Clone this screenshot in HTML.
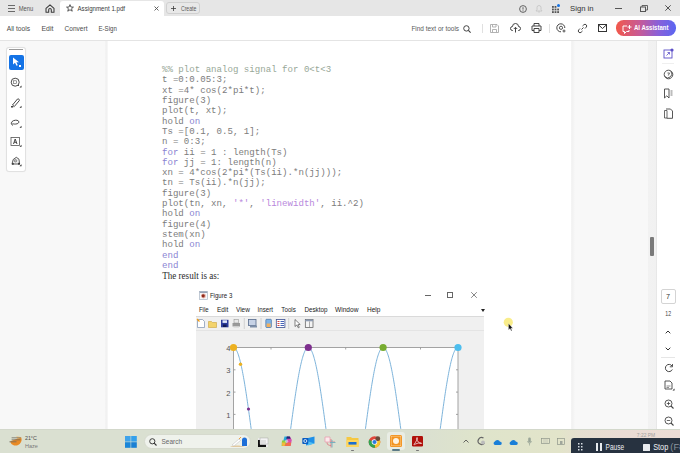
<!DOCTYPE html>
<html><head><meta charset="utf-8">
<style>
*{margin:0;padding:0;box-sizing:border-box}
html,body{width:680px;height:453px;overflow:hidden;background:#fff;font-family:"Liberation Sans",sans-serif;position:relative}
.a{position:absolute}
.t{position:absolute;white-space:nowrap;line-height:1;transform-origin:0 0}
svg{position:absolute;overflow:visible}
#titlebar{left:0;top:0;width:680px;height:16px;background:#e6e6e6}
#tab{left:60px;top:1px;width:104px;height:15px;background:#fff;border-radius:3px 3px 0 0}
#create{left:166px;top:2.2px;width:34.4px;height:12.2px;border:0.8px solid #d0d0d0;border-radius:3px;background:#e8e8e8}
#toolbar{left:0;top:16px;width:680px;height:25px;background:#fff;border-bottom:1px solid #e4e4e4}
#leftpanel{left:0;top:41px;width:108px;height:388px;background:linear-gradient(90deg,#f8f8f8 0,#f8f8f8 104.5px,#f0f0f0 106px,#f2f2f2 107px,#fafafa 108px)}
#rightgray{left:571px;top:41px;width:86px;height:388px;background:linear-gradient(90deg,#f6f6f6 0,#f1f1f1 1px,#f4f4f4 2.5px,#f8f8f8 4px,#f8f8f8 100%)}
#scrolltrack{left:648px;top:41px;width:9px;height:388px;background:linear-gradient(90deg,#f2f2f2 0,#f1f1f1 7.5px,#e6e6e6 8px,#e9e9e9 9px)}
#rail{left:657px;top:41px;width:23px;height:388px;background:#fff}
#code{left:162px;top:65px;font-family:"Liberation Mono",monospace;font-size:9.1px;line-height:10.32px;color:#7c7c7c;white-space:pre}
.kw{color:#8a84d2}
.cm{color:#98a898}
.st{color:#b888dc}
#taskbar{left:0;top:429px;width:680px;height:24px;background:#dae0d1}
.ui{color:#4b4b4b}
</style></head><body>
<div class="a" id="titlebar"></div>
<div class="a" id="tab"></div>
<div class="a" id="create"></div>
<!-- hamburger -->
<div class="a" style="left:8px;top:5.3px;width:7px;height:1.1px;background:#6a6a6a"></div>
<div class="a" style="left:8px;top:8px;width:7px;height:1.1px;background:#6a6a6a"></div>
<div class="a" style="left:8px;top:10.7px;width:7px;height:1.1px;background:#6a6a6a"></div>
<svg style="left:45px;top:3.8px" width="10" height="9" viewBox="0 0 10 9"><path d="M1 4.3 L5 0.8 L9 4.3 V8.3 H6.3 V5.8 A1.3 1.3 0 0 0 3.7 5.8 V8.3 H1 Z" fill="none" stroke="#3a3a3a" stroke-width="1.05" stroke-linejoin="round"/></svg>
<svg style="left:65.5px;top:4px" width="8" height="8" viewBox="0 0 10 10"><path d="M5 0.8 L6.2 3.8 L9.3 3.9 L6.9 5.9 L7.8 9 L5 7.2 L2.2 9 L3.1 5.9 L0.7 3.9 L3.8 3.8 Z" fill="none" stroke="#444" stroke-width="1.1" stroke-linejoin="round"/></svg>
<svg style="left:153.5px;top:6px" width="5" height="5" viewBox="0 0 5 5"><path d="M0.5 0.5 L4.5 4.5 M4.5 0.5 L0.5 4.5" stroke="#555" stroke-width="0.9"/></svg>
<svg style="left:171px;top:6px" width="5" height="5" viewBox="0 0 5 5"><path d="M2.5 0 V5 M0 2.5 H5" stroke="#333" stroke-width="0.75"/></svg>
<!-- right title -->
<svg style="left:519px;top:4.5px" width="8" height="8" viewBox="0 0 8 8"><circle cx="4" cy="4" r="3.4" fill="none" stroke="#555" stroke-width="0.9"/><path d="M4 2.2 V4.6" stroke="#555" stroke-width="0.9"/><circle cx="4" cy="5.8" r="0.5" fill="#555"/></svg>
<svg style="left:535px;top:4px" width="8" height="9" viewBox="0 0 8 9"><path d="M1 7 H7 L6 5.5 V3.5 A2 2 0 0 0 2 3.5 V5.5 Z M3.2 8 H4.8" fill="none" stroke="#c6c6c6" stroke-width="0.9"/></svg>
<svg style="left:552px;top:4px" width="9" height="9" viewBox="0 0 9 9"><g fill="#555"><rect x="0" y="2" width="1.8" height="1.8"/><rect x="2.6" y="2" width="1.8" height="1.8"/><rect x="0" y="4.6" width="1.8" height="1.8"/><rect x="2.6" y="4.6" width="1.8" height="1.8"/><rect x="5.2" y="4.6" width="1.8" height="1.8"/><rect x="0" y="7.2" width="1.8" height="1.8"/><rect x="2.6" y="7.2" width="1.8" height="1.8"/><rect x="5.2" y="7.2" width="1.8" height="1.8"/></g><circle cx="6.5" cy="1.5" r="1.5" fill="#1473e6"/></svg>
<div class="a" style="left:615px;top:8px;width:7px;height:1px;background:#555"></div>
<svg style="left:640px;top:4.5px" width="8" height="7" viewBox="0 0 8 7"><rect x="0.5" y="2" width="5" height="4.5" fill="none" stroke="#555" stroke-width="1"/><path d="M2 2 V0.5 H7.5 V5 H5.5" fill="none" stroke="#555" stroke-width="0.9"/></svg>
<svg style="left:665px;top:5px" width="6" height="6" viewBox="0 0 6 6"><path d="M0.3 0.3 L5.7 5.7 M5.7 0.3 L0.3 5.7" stroke="#444" stroke-width="0.9"/></svg>

<div class="a" id="toolbar"></div>
<svg style="left:463px;top:24.5px" width="9" height="9" viewBox="0 0 9 9"><circle cx="3.4" cy="3.4" r="2.7" fill="none" stroke="#3a3a3a" stroke-width="0.95"/><path d="M5.4 5.4 L7.6 7.6" stroke="#3a3a3a" stroke-width="1.05"/></svg>
<div class="a" style="left:482px;top:24px;width:1px;height:9px;background:#e0e0e0"></div>
<svg style="left:490px;top:23.8px" width="9" height="9" viewBox="0 0 9 9"><path d="M0.5 0.5 H7 L8.5 2 V8.5 H0.5 Z M2.5 0.5 V3 H6 V0.5 M2.5 8.5 V5.5 H6.5 V8.5" fill="none" stroke="#aaa" stroke-width="0.9"/></svg>
<svg style="left:510px;top:22.8px" width="11" height="10" viewBox="0 0 11 10"><path d="M3 7.5 H2.5 A2 2 0 0 1 2.5 3.5 A3 3 0 0 1 8.5 3.5 A2 2 0 0 1 8.5 7.5 H8 M5.5 9.5 V4.5 M3.8 6 L5.5 4.3 L7.2 6" fill="none" stroke="#444" stroke-width="1"/></svg>
<svg style="left:531px;top:23.2px" width="11" height="10" viewBox="0 0 11 10"><path d="M3 3 V0.5 H8 V3 M3 7.5 H1 V3 H10 V7.5 H8 M3 5.5 H8 V9.5 H3 Z" fill="none" stroke="#444" stroke-width="1"/></svg>
<div class="a" style="left:549px;top:24px;width:1px;height:9px;background:#e0e0e0"></div>
<svg style="left:556px;top:23.2px" width="11" height="10" viewBox="0 0 11 10"><path d="M8.8 5 A4 4 0 1 0 5 8.8" fill="none" stroke="#444" stroke-width="1"/><circle cx="5" cy="4.8" r="1.6" fill="none" stroke="#444" stroke-width="0.9"/><path d="M8 6.5 V9.5 M6.5 8 H9.5" stroke="#444" stroke-width="0.9"/></svg>
<svg style="left:578px;top:23.7px" width="9" height="9" viewBox="0 0 9 9"><path d="M3.5 5.5 L5.5 3.5 M4.5 2 L5.8 0.8 A1.6 1.6 0 0 1 8.2 3.2 L7 4.5 M4.5 7 L3.2 8.2 A1.6 1.6 0 0 1 0.8 5.8 L2 4.5" fill="none" stroke="#444" stroke-width="1"/></svg>
<svg style="left:598px;top:24.2px" width="9" height="8" viewBox="0 0 9 8"><rect x="0.5" y="0.5" width="8" height="7" fill="none" stroke="#333" stroke-width="1"/><path d="M0.5 0.8 L4.5 4.5 L8.5 0.8" fill="none" stroke="#333" stroke-width="1"/></svg>
<div class="a" style="left:616.4px;top:20.3px;width:59.5px;height:15.3px;border-radius:7.6px;background:linear-gradient(90deg,#f2584a 0%,#c65a98 40%,#8a60d8 70%,#5a66f2 100%)"></div>
<svg style="left:622px;top:24.5px" width="10" height="9" viewBox="0 0 10 9"><path d="M5 1 H1 V6.5 H2.5 V8.5 L4.5 6.5 H7 V5" fill="none" stroke="#fff" stroke-width="1"/><path d="M7.5 0 V4 M5.5 2 H9.5" stroke="#fff" stroke-width="1"/></svg>

<div class="a" id="leftpanel"></div>
<div class="a" id="rightgray"></div>
<div class="a" id="scrolltrack"></div>
<div class="a" id="rail"></div>

<!-- left tool palette -->
<div class="a" style="left:6.4px;top:46.5px;width:19.3px;height:125px;background:#fff;border:1px solid #e1e1e1;border-radius:3px;box-shadow:0 0 1px rgba(0,0,0,.08)"></div>
<div class="a" style="left:9px;top:48.5px;width:14px;height:1.2px;background:#9a9a9a"></div>
<div class="a" style="left:8.5px;top:54.5px;width:15px;height:15.5px;background:#1473e6;border-radius:2px"></div>
<svg style="left:12px;top:57px" width="9" height="10" viewBox="0 0 9 10"><path d="M1 0.5 L1 7.5 L3 5.8 L4.5 8.8 L5.8 8.2 L4.4 5.3 L7 5.2 Z" fill="#fff"/><path d="M7 8 L9 8 L9 10 L7 10Z" fill="#fff"/></svg>
<svg style="left:10px;top:77px" width="12" height="12" viewBox="0 0 12 12"><circle cx="5.2" cy="5.2" r="4" fill="none" stroke="#333" stroke-width="0.9"/><rect x="3.6" y="3.8" width="3" height="2.6" fill="none" stroke="#555" stroke-width="0.6"/><path d="M8 8 L9 9" stroke="#333" stroke-width="0.9"/><path d="M9.5 10.5 L11.5 10.5 L11.5 8.5Z" fill="#222"/></svg>
<svg style="left:10px;top:96.5px" width="12" height="12" viewBox="0 0 12 12"><path d="M2.5 8 L7.5 2 A1.3 1.3 0 0 1 9.3 3.6 L4.3 9.5 Z" fill="none" stroke="#333" stroke-width="0.9"/><path d="M1 9.8 L3.2 9.8" stroke="#222" stroke-width="1.3"/><path d="M9.5 10.8 L11.5 10.8 L11.5 8.8Z" fill="#222"/></svg>
<svg style="left:10px;top:116.5px" width="12" height="12" viewBox="0 0 12 12"><path d="M3 8.3 C0 7.5 1 3.5 5.5 3.2 C9.5 3 9.8 6 7 6.8 C5 7.3 3.5 7.2 2.5 6.3" fill="none" stroke="#333" stroke-width="0.9"/><path d="M9.5 10.8 L11.5 10.8 L11.5 8.8Z" fill="#222"/></svg>
<svg style="left:10px;top:135.5px" width="12" height="12" viewBox="0 0 12 12"><rect x="1" y="1.5" width="8.5" height="8" fill="none" stroke="#555" stroke-width="0.8"/><path d="M3.5 8 L5.2 3 L7 8 M4.2 6.3 H6.3" fill="none" stroke="#333" stroke-width="0.9"/><path d="M9.5 10.8 L11.5 10.8 L11.5 8.8Z" fill="#222"/></svg>
<svg style="left:10px;top:155px" width="12" height="12" viewBox="0 0 12 12"><path d="M2 9 L3.2 4.5 L6.3 2.3 L9 4.2 L9.6 9 Z" fill="#f2f2f2" stroke="#333" stroke-width="0.8"/><circle cx="5.5" cy="5.8" r="1.3" fill="#bbb" stroke="#555" stroke-width="0.5"/><path d="M1.5 9.6 L3.3 7.8 L3.8 9.6 Z M8 9.6 L8.6 7.6 L10.3 9.6 Z" fill="#111"/><path d="M9.5 11.2 L11.5 11.2 L11.5 9.2Z" fill="#222"/></svg>

<!-- right rail -->
<svg style="left:663px;top:47.5px" width="11" height="11" viewBox="0 0 11 11"><rect x="1" y="2" width="8" height="8" fill="none" stroke="#5b4fc7" stroke-width="0.9"/><path d="M3.5 7.5 L6.5 4.5 M4.5 4.5 H6.5 V6.5" fill="none" stroke="#5b4fc7" stroke-width="0.8"/><circle cx="9" cy="2" r="1.6" fill="#5b4fc7"/></svg>
<div class="a" style="left:662px;top:63px;width:12px;height:1px;background:#efefef"></div>
<svg style="left:663px;top:68.5px" width="11" height="11" viewBox="0 0 11 11"><circle cx="5.5" cy="5.5" r="4.3" fill="none" stroke="#444" stroke-width="0.9"/><path d="M1.8 7.5 A4 4 0 0 0 7.8 2.2" fill="none" stroke="#444" stroke-width="0.9"/><path d="M4.5 4 H6.5 L5.3 6.5" fill="none" stroke="#444" stroke-width="0.8"/></svg>
<svg style="left:663px;top:88px" width="11" height="11" viewBox="0 0 11 11"><path d="M1.5 1 H6 V10 L3.8 7.8 L1.5 10 Z" fill="none" stroke="#444" stroke-width="0.9"/><path d="M7.5 3 H9.5 M7.5 5 H9.5 M7.5 7 H9.5" stroke="#444" stroke-width="0.7"/></svg>
<svg style="left:663px;top:107.5px" width="11" height="11" viewBox="0 0 11 11"><path d="M1.5 2.5 H4 V10 H1.5 Z" fill="none" stroke="#444" stroke-width="0.8"/><path d="M3 1 H7.5 L9.5 3 V10.3 H3.8" fill="none" stroke="#444" stroke-width="0.9"/></svg>
<div class="a" style="left:649.9px;top:236.6px;width:4.6px;height:19.2px;background:#7a7a7a;border-radius:1px"></div>
<div class="a" style="left:660.5px;top:288.5px;width:15px;height:15.5px;border:1px solid #d4d4d4;border-radius:2px;background:#fff"></div>
<svg style="left:665px;top:330px" width="6" height="4" viewBox="0 0 6 4"><path d="M0.7 3.3 L3 1 L5.3 3.3" fill="none" stroke="#333" stroke-width="1"/></svg>
<svg style="left:665px;top:346.5px" width="6" height="4" viewBox="0 0 6 4"><path d="M0.7 0.7 L3 3 L5.3 0.7" fill="none" stroke="#333" stroke-width="1"/></svg>
<div class="a" style="left:661px;top:357px;width:14px;height:1px;background:#e6e6e6"></div>
<svg style="left:664px;top:363px" width="10" height="10" viewBox="0 0 10 10"><path d="M8 3 A3.6 3.6 0 1 0 8.3 6.5" fill="none" stroke="#444" stroke-width="1"/><path d="M8.5 1 V3.8 H5.8" fill="none" stroke="#444" stroke-width="0.9"/></svg>
<svg style="left:664px;top:379.5px" width="11" height="11" viewBox="0 0 11 11"><path d="M1 1 H6 L8 3 V9 H1 Z" fill="none" stroke="#444" stroke-width="0.9"/><path d="M2.5 6 H6.5 M2.5 7.5 H5" stroke="#444" stroke-width="0.6"/><path d="M8.5 10.5 L10.5 10.5 L10.5 8.5Z" fill="#222"/></svg>
<svg style="left:664px;top:398.5px" width="11" height="11" viewBox="0 0 11 11"><circle cx="4.5" cy="4.5" r="3.5" fill="none" stroke="#444" stroke-width="0.9"/><path d="M7 7 L9.5 9.5" stroke="#444" stroke-width="1.1"/><path d="M4.5 2.8 V6.2 M2.8 4.5 H6.2" stroke="#444" stroke-width="0.8"/></svg>
<svg style="left:664px;top:415.5px" width="11" height="11" viewBox="0 0 11 11"><circle cx="4.5" cy="4.5" r="3.5" fill="none" stroke="#444" stroke-width="0.9"/><path d="M7 7 L9.5 9.5" stroke="#444" stroke-width="1.1"/><path d="M2.8 4.5 H6.2" stroke="#444" stroke-width="0.8"/></svg>
<div class="a" id="code"><span class="cm">%% plot analog signal for 0&lt;t&lt;3</span>
t =0:0.05:3;
xt =4* cos(2*pi*t);
figure(3)
plot(t, xt);
hold <span class="kw">on</span>
Ts =[0.1, 0.5, 1];
n = 0:3;
<span class="kw">for</span> ii = 1 : length(Ts)
<span class="kw">for</span> jj = 1: length(n)
xn = 4*cos(2*pi*(Ts(ii).*n(jj)));
tn = Ts(ii).*n(jj);
figure(3)
plot(tn, xn, <span class="st">'*'</span>, <span class="st">'linewidth'</span>, ii.^2)
hold <span class="kw">on</span>
figure(4)
stem(xn)
hold <span class="kw">on</span>
<span class="kw">end</span>
<span class="kw">end</span></div>

<!-- figure window -->
<div class="a" style="left:196px;top:284px;width:288px;height:145px;background:#fff"></div>
<svg style="left:199px;top:291px" width="9" height="9" viewBox="0 0 9 9"><rect x="0.4" y="0.4" width="8.2" height="8.2" fill="#f6f8fa" stroke="#aab6c6" stroke-width="0.7"/><rect x="0.8" y="0.6" width="7.4" height="1.2" fill="#7f8ea6"/><circle cx="4.5" cy="5" r="2.4" fill="#e8b0a8"/><circle cx="4.2" cy="4.8" r="1.6" fill="#8e2a1c"/></svg>
<div class="a" style="left:424.5px;top:295px;width:6px;height:0.7px;background:#666"></div>
<div class="a" style="left:447px;top:292px;width:6px;height:6px;border:0.7px solid #666"></div>
<svg style="left:471px;top:292px" width="6" height="6" viewBox="0 0 6 6"><path d="M0.2 0.2 L5.8 5.8 M5.8 0.2 L0.2 5.8" stroke="#555" stroke-width="0.7"/></svg>
<svg style="left:481px;top:308.5px" width="4" height="3" viewBox="0 0 4 3"><path d="M0 0 H4 L2 3Z" fill="#222"/></svg>
<div class="a" style="left:196px;top:315.5px;width:288px;height:15px;background:#f0f0f0;border-top:1px solid #dadada;border-bottom:1px solid #d8d8d8"></div>
<svg style="left:0;top:0" width="680" height="453" viewBox="0 0 680 453">
 <g>
  <path d="M197.5 319.5 H202.5 L204.5 321.5 V327.5 H197.5 Z" fill="#fff" stroke="#7a8fb0" stroke-width="0.7"/><path d="M197 319 L199.5 321.5" stroke="#f39c12" stroke-width="1.2"/>
  <path d="M208.5 321.5 H211.5 L212.5 322.5 H216.5 V327.5 H208.5 Z" fill="#f3d36b" stroke="#c9a23a" stroke-width="0.6"/>
  <rect x="221" y="319.8" width="7.5" height="7.5" fill="#2b3a9a"/><rect x="222.5" y="320.3" width="4.5" height="2.6" fill="#dfe6f8"/><rect x="223" y="324.5" width="3.5" height="2.5" fill="#111a55"/>
  <path d="M232.5 323 H240 V326.5 H232.5 Z" fill="#9a9a9a"/><rect x="234" y="319.5" width="4.5" height="3.5" fill="#e9e9e9" stroke="#888" stroke-width="0.5"/><rect x="233.5" y="326" width="5.5" height="1.5" fill="#cfcfcf"/>
  <path d="M244.3 318 V329" stroke="#c9c9c9" stroke-width="0.8"/>
  <rect x="248.5" y="319.5" width="7.5" height="6" fill="#c6d2e6" stroke="#55698a" stroke-width="0.8"/><path d="M250 325.5 H257 V327.5 H250Z" fill="#7d8fa8"/>
  <path d="M261 318 V329" stroke="#c9c9c9" stroke-width="0.8"/>
  <rect x="265.8" y="319.3" width="5.6" height="8.2" rx="0.8" fill="#7fb3e6" stroke="#2d5f9a" stroke-width="0.6"/><rect x="266.6" y="323.5" width="4" height="3.5" fill="#f0b060"/>
  <rect x="276.3" y="319.5" width="8.6" height="8" fill="#fff" stroke="#3b4f8f" stroke-width="0.8"/><path d="M277.5 321.5 H279.5 M277.5 323.5 H279.5 M277.5 325.5 H279.5" stroke="#d03030" stroke-width="0.9"/><path d="M280.5 321.5 H284 M280.5 323.5 H284 M280.5 325.5 H284" stroke="#3050b0" stroke-width="0.9"/>
  <path d="M288.7 318 V329" stroke="#c9c9c9" stroke-width="0.8"/>
  <path d="M295 319.5 V326.5 L296.8 325 L298.3 327.8 L299.3 327.3 L297.9 324.6 L300.2 324.5 Z" fill="#fff" stroke="#333" stroke-width="0.6"/>
  <rect x="305.3" y="319.5" width="7.7" height="8" fill="#f4f4f4" stroke="#555" stroke-width="0.7"/><rect x="305.3" y="319.5" width="7.7" height="1.8" fill="#8c9ab0"/><path d="M309.5 321.5 V327.5" stroke="#777" stroke-width="0.6"/>
 </g>
 <rect x="196" y="330.5" width="288" height="100" fill="#f0f0f0"/>
 <rect x="233.5" y="347.5" width="224.5" height="90" fill="#fff"/>
 <g stroke="#999" stroke-width="0.9" fill="none">
  <path d="M233.5 440 V347.5 H458 V440"/>
  <path d="M271 347.5 V349.5 M308.3 347.5 V349.5 M345.7 347.5 V349.5 M383.1 347.5 V349.5 M420.5 347.5 V349.5"/>
  <path d="M233.5 369.8 H235.5 M233.5 392.1 H235.5 M233.5 414.4 H235.5"/>
  <path d="M458 369.8 H456 M458 392.1 H456 M458 414.4 H456"/>
 </g>
 <g font-family="Liberation Sans" font-size="7.6" fill="#555" text-anchor="end">
  <text x="230.6" y="351.2">4</text><text x="230.6" y="373.4">3</text><text x="230.6" y="395.6">2</text><text x="230.6" y="417.8">1</text>
 </g>
 <path d="M233.50 347.50 L233.87 347.54 L234.25 347.68 L234.62 347.90 L235.00 348.20 L235.37 348.60 L235.74 349.08 L236.12 349.65 L236.49 350.30 L236.87 351.04 L237.24 351.87 L237.61 352.77 L237.99 353.76 L238.36 354.84 L238.74 355.99 L239.11 357.22 L239.48 358.53 L239.86 359.92 L240.23 361.39 L240.61 362.92 L240.98 364.54 L241.35 366.22 L241.73 367.97 L242.10 369.79 L242.48 371.68 L242.85 373.63 L243.22 375.64 L243.60 377.71 L243.97 379.84 L244.35 382.03 L244.72 384.27 L245.09 386.56 L245.47 388.90 L245.84 391.29 L246.22 393.73 L246.59 396.20 L246.96 398.72 L247.34 401.27 L247.71 403.86 L248.09 406.48 L248.46 409.14 L248.83 411.81 L249.21 414.52 L249.58 417.24 L249.96 419.99 L250.33 422.75 L250.70 425.52 L251.08 428.31 L251.45 431.10 L251.83 433.90 L252.20 436.70 L252.57 439.50 M289.23 439.50 L289.60 436.70 L289.97 433.90 L290.35 431.10 L290.72 428.31 L291.10 425.52 L291.47 422.75 L291.84 419.99 L292.22 417.24 L292.59 414.52 L292.97 411.81 L293.34 409.14 L293.71 406.48 L294.09 403.86 L294.46 401.27 L294.84 398.72 L295.21 396.20 L295.58 393.73 L295.96 391.29 L296.33 388.90 L296.71 386.56 L297.08 384.27 L297.45 382.03 L297.83 379.84 L298.20 377.71 L298.58 375.64 L298.95 373.63 L299.32 371.68 L299.70 369.79 L300.07 367.97 L300.45 366.22 L300.82 364.54 L301.19 362.92 L301.57 361.39 L301.94 359.92 L302.32 358.53 L302.69 357.22 L303.06 355.99 L303.44 354.84 L303.81 353.76 L304.19 352.77 L304.56 351.87 L304.93 351.04 L305.31 350.30 L305.68 349.65 L306.06 349.08 L306.43 348.60 L306.80 348.20 L307.18 347.90 L307.55 347.68 L307.93 347.54 L308.30 347.50 L308.67 347.54 L309.05 347.68 L309.42 347.90 L309.80 348.20 L310.17 348.60 L310.54 349.08 L310.92 349.65 L311.29 350.30 L311.67 351.04 L312.04 351.87 L312.41 352.77 L312.79 353.76 L313.16 354.84 L313.54 355.99 L313.91 357.22 L314.28 358.53 L314.66 359.92 L315.03 361.39 L315.41 362.92 L315.78 364.54 L316.15 366.22 L316.53 367.97 L316.90 369.79 L317.28 371.68 L317.65 373.63 L318.02 375.64 L318.40 377.71 L318.77 379.84 L319.15 382.03 L319.52 384.27 L319.89 386.56 L320.27 388.90 L320.64 391.29 L321.02 393.73 L321.39 396.20 L321.76 398.72 L322.14 401.27 L322.51 403.86 L322.89 406.48 L323.26 409.14 L323.63 411.81 L324.01 414.52 L324.38 417.24 L324.76 419.99 L325.13 422.75 L325.50 425.52 L325.88 428.31 L326.25 431.10 L326.63 433.90 L327.00 436.70 L327.37 439.50 M364.03 439.50 L364.40 436.70 L364.77 433.90 L365.15 431.10 L365.52 428.31 L365.90 425.52 L366.27 422.75 L366.64 419.99 L367.02 417.24 L367.39 414.52 L367.77 411.81 L368.14 409.14 L368.51 406.48 L368.89 403.86 L369.26 401.27 L369.64 398.72 L370.01 396.20 L370.38 393.73 L370.76 391.29 L371.13 388.90 L371.51 386.56 L371.88 384.27 L372.25 382.03 L372.63 379.84 L373.00 377.71 L373.38 375.64 L373.75 373.63 L374.12 371.68 L374.50 369.79 L374.87 367.97 L375.25 366.22 L375.62 364.54 L375.99 362.92 L376.37 361.39 L376.74 359.92 L377.12 358.53 L377.49 357.22 L377.86 355.99 L378.24 354.84 L378.61 353.76 L378.99 352.77 L379.36 351.87 L379.73 351.04 L380.11 350.30 L380.48 349.65 L380.86 349.08 L381.23 348.60 L381.60 348.20 L381.98 347.90 L382.35 347.68 L382.73 347.54 L383.10 347.50 L383.47 347.54 L383.85 347.68 L384.22 347.90 L384.60 348.20 L384.97 348.60 L385.34 349.08 L385.72 349.65 L386.09 350.30 L386.47 351.04 L386.84 351.87 L387.21 352.77 L387.59 353.76 L387.96 354.84 L388.34 355.99 L388.71 357.22 L389.08 358.53 L389.46 359.92 L389.83 361.39 L390.21 362.92 L390.58 364.54 L390.95 366.22 L391.33 367.97 L391.70 369.79 L392.08 371.68 L392.45 373.63 L392.82 375.64 L393.20 377.71 L393.57 379.84 L393.95 382.03 L394.32 384.27 L394.69 386.56 L395.07 388.90 L395.44 391.29 L395.82 393.73 L396.19 396.20 L396.56 398.72 L396.94 401.27 L397.31 403.86 L397.69 406.48 L398.06 409.14 L398.43 411.81 L398.81 414.52 L399.18 417.24 L399.56 419.99 L399.93 422.75 L400.30 425.52 L400.68 428.31 L401.05 431.10 L401.43 433.90 L401.80 436.70 L402.17 439.50 M438.83 439.50 L439.20 436.70 L439.57 433.90 L439.95 431.10 L440.32 428.31 L440.70 425.52 L441.07 422.75 L441.44 419.99 L441.82 417.24 L442.19 414.52 L442.57 411.81 L442.94 409.14 L443.31 406.48 L443.69 403.86 L444.06 401.27 L444.44 398.72 L444.81 396.20 L445.18 393.73 L445.56 391.29 L445.93 388.90 L446.31 386.56 L446.68 384.27 L447.05 382.03 L447.43 379.84 L447.80 377.71 L448.18 375.64 L448.55 373.63 L448.92 371.68 L449.30 369.79 L449.67 367.97 L450.05 366.22 L450.42 364.54 L450.79 362.92 L451.17 361.39 L451.54 359.92 L451.92 358.53 L452.29 357.22 L452.66 355.99 L453.04 354.84 L453.41 353.76 L453.79 352.77 L454.16 351.87 L454.53 351.04 L454.91 350.30 L455.28 349.65 L455.66 349.08 L456.03 348.60 L456.40 348.20 L456.78 347.90 L457.15 347.68 L457.53 347.54 L457.90 347.50" fill="none" stroke="#6eaad6" stroke-width="0.9"/>
 <circle cx="233.5" cy="347.5" r="3.6" fill="#EDB120"/>
 <circle cx="240.5" cy="364.3" r="1.7" fill="#EDB120"/>
 <circle cx="248.5" cy="409" r="1.6" fill="#7E2F8E"/>
 <circle cx="308.3" cy="347.5" r="3.6" fill="#7E2F8E"/>
 <circle cx="383.1" cy="347.5" r="3.6" fill="#77AC30"/>
 <circle cx="458" cy="347.5" r="3.6" fill="#4DBEEE"/>
 <circle cx="508.3" cy="322.3" r="4.6" fill="#f6e55a" opacity="0.7"/>
 <path d="M508.5 323.5 V330 L510 328.6 L511.2 331 L512 330.6 L510.9 328.3 L512.8 328.2 Z" fill="#111" stroke="#fff" stroke-width="0.3"/>
</svg>
<div class="a" id="taskbar"></div>
<div class="a" style="left:420px;top:429px;width:260px;height:24px;background:linear-gradient(90deg,rgba(224,228,203,0) 0px,#dfe4cb 60px,#e2e4ca 140px,#e6dfd0 160px,#eadcd5 200px,#ebdcd6 260px)"></div>
<div class="a" style="left:0;top:429px;width:680px;height:0.8px;background:#d3d8cb"></div>
<!-- weather -->
<svg style="left:8px;top:434.5px" width="14" height="12" viewBox="0 0 14 12"><path d="M13.3 2.5 A5.6 5.6 0 0 1 2 6.5 L12.8 2.2 Z" fill="#e98a24"/><path d="M8 1.5 A5 5 0 0 1 13.3 3 L10 4 Z" fill="#f7c070" opacity="0.7"/><path d="M3.6 2.8 H12.8 M3.6 4.8 H12.5 M1.4 6.8 H8.5" stroke="#6e6a60" stroke-width="0.9" opacity="0.85"/></svg>
<!-- start -->
<svg style="left:124.7px;top:435.9px" width="12" height="12" viewBox="0 0 12 12"><g fill="#1b8ee0"><rect x="0" y="0" width="5.6" height="5.6" fill="#3fa3ea"/><rect x="6.2" y="0" width="5.6" height="5.6" fill="#33a0ec"/><rect x="0" y="6.2" width="5.6" height="5.6" fill="#1a86d8"/><rect x="6.2" y="6.2" width="5.6" height="5.6" fill="#1a80d4"/></g></svg>
<div class="a" style="left:143.5px;top:434px;width:107.5px;height:15px;border-radius:7.5px;background:#eff2ec;border:0.6px solid #d6dace"></div>
<svg style="left:148.8px;top:437.8px" width="8" height="8" viewBox="0 0 8 8"><circle cx="3.3" cy="3.3" r="2.6" fill="none" stroke="#333" stroke-width="0.95"/><path d="M5.2 5.2 L7.5 7.5" stroke="#333" stroke-width="1.1"/></svg>
<svg style="left:228px;top:436px" width="21" height="12" viewBox="0 0 21 12"><path d="M2 11 C6 9 12 9 17 11 Z" fill="#e2c9a0"/><path d="M4 9 L11 3 L12.5 4.5 L6 10 Z" fill="#fff" stroke="#bbb" stroke-width="0.5"/><path d="M11 3 L13 1" stroke="#f0a040" stroke-width="1"/><path d="M14 10 V4 A2.5 2.5 0 0 1 19 4 V10 Z" fill="#1e6fd8"/></svg>
<!-- task icons -->
<svg style="left:258px;top:438px" width="10" height="9" viewBox="0 0 10 9"><rect x="0" y="0" width="10" height="9" fill="#eaeaea"/><rect x="0" y="2" width="8" height="7" fill="#111"/><rect x="2" y="0" width="8" height="6" fill="#f4f4f4" stroke="#999" stroke-width="0.4"/><rect x="2" y="2" width="6" height="4.8" fill="#e0e0e0"/></svg>
<svg style="left:280.6px;top:435.6px" width="11.3" height="10.6" viewBox="0 0 11.3 10.6"><path d="M3.5 0.5 H7.5 L5 10 H1 Z" fill="#2aa7d8"/><path d="M1 4.5 H5.5 L4.5 10.1 H0.6 Z" fill="#8fcf3a"/><path d="M0.8 6.5 H4.5 L3.8 10.1 H1.3 Z" fill="#f6b73c"/><path d="M6 0.5 H9 L10.8 4 L9.5 10 H5.5 Z" fill="#d54fb0"/><path d="M5.5 6.5 H10.3 L9.5 10.1 H3.5 Z" fill="#f26d4f"/><path d="M5.8 0.4 H8.8 L9.6 2.8 H5.2 Z" fill="#1c2a78"/><circle cx="5.6" cy="5.3" r="1.6" fill="#f4e6f8" opacity="0.55"/></svg>
<svg style="left:301.5px;top:435.6px" width="13" height="10" viewBox="0 0 13 10"><path d="M4 2.5 L12.5 0.5 V7.5 L4 9.5 Z" fill="#1e90e8"/><path d="M5 5 L12.5 7.5 L6 9.5 Z" fill="#50c0f5"/><rect x="0.3" y="2" width="6" height="6" rx="0.8" fill="#0a5cc0"/><circle cx="3.3" cy="5" r="1.5" fill="none" stroke="#fff" stroke-width="0.8"/></svg>
<svg style="left:324.4px;top:435.6px" width="12" height="12" viewBox="0 0 12 12"><path d="M1 1 H6 V6 H1 Z" fill="#fbe9ec" stroke="#e8a0b0" stroke-width="0.8"/><path d="M3 6.5 C3 9 5 9.5 7 9.5 M6.5 6 H11 M7 3 V11.5" fill="none" stroke="#e0707a" stroke-width="0.8"/><path d="M6 6.5 H11.5 M8 4 V11.5" stroke="#6fb0c0" stroke-width="0.9"/></svg>
<svg style="left:345.6px;top:435.6px" width="13" height="12" viewBox="0 0 13 12"><path d="M0.5 1 H5 L6 2 H12.5 V11 H0.5 Z" fill="#f5c842"/><rect x="0.5" y="4" width="12" height="7" fill="#ffd65c"/><rect x="2.5" y="6" width="8" height="2.6" fill="#1d6fd0"/></svg>
<div class="a" style="left:350.5px;top:449.5px;width:3px;height:1.2px;background:#777;border-radius:1px"></div>
<svg style="left:367.6px;top:435.6px" width="13" height="12" viewBox="0 0 12 12"><circle cx="6" cy="6" r="5.8" fill="#e0463a"/><path d="M6 6 L11.3 3.5 A5.8 5.8 0 0 1 6.5 11.8 Z" fill="#f5c330"/><path d="M6 6 L6.5 11.8 A5.8 5.8 0 0 1 0.6 3.8 Z" fill="#32a350"/><circle cx="6" cy="6" r="2.8" fill="#fff"/><circle cx="6" cy="6" r="2.1" fill="#2d7be0"/><circle cx="9.3" cy="2.7" r="2.4" fill="#6a4a3a"/></svg>
<div class="a" style="left:386.5px;top:432px;width:18.2px;height:18px;background:#e9ede5;border-radius:3px"></div>
<svg style="left:390px;top:435px" width="12" height="12" viewBox="0 0 12 12"><rect x="0" y="0" width="12" height="12" rx="1.5" fill="#f39422"/><rect x="1.2" y="1.2" width="9.6" height="9.6" fill="none" stroke="#ffd49a" stroke-width="0.5"/><circle cx="6" cy="6" r="3" fill="#fff3e0"/></svg>
<div class="a" style="left:391.8px;top:449.3px;width:8.2px;height:1.5px;background:#5b7a86;border-radius:1px"></div>
<svg style="left:412.4px;top:435.6px" width="11" height="10.5" viewBox="0 0 11 10.5"><rect x="0" y="0" width="11" height="10.5" rx="1.3" fill="#b0100a"/><path d="M2 8.5 C4 6 5.5 3 5.3 1.8 C5 1 4.6 1.8 4.8 3 C5.2 5 7 7.5 9 7.6 C10 7.6 9.8 6.8 8.5 6.8 C6.5 6.8 3.5 7.8 2.3 8.8 Z" fill="none" stroke="#fff" stroke-width="0.7"/></svg>
<div class="a" style="left:416px;top:449.5px;width:2.5px;height:1.2px;background:#777;border-radius:1px"></div>
<!-- tray -->
<svg style="left:463px;top:439px" width="6" height="4" viewBox="0 0 6 4"><path d="M0.5 3.5 L3 1 L5.5 3.5" fill="none" stroke="#444" stroke-width="0.8"/></svg>
<svg style="left:477px;top:437px" width="9" height="8" viewBox="0 0 9 8"><path d="M6.5 1 A3.5 3.5 0 1 0 7.5 6" fill="none" stroke="#666" stroke-width="1.2"/><circle cx="6" cy="5.5" r="2" fill="#bbb"/></svg>
<svg style="left:493px;top:438.5px" width="9" height="6" viewBox="0 0 9 6"><path d="M1.8 6 A1.8 1.8 0 0 1 1.8 2.6 A2.8 2.8 0 0 1 7 2.8 A1.6 1.6 0 0 1 7.3 6 Z" fill="#1a7fd8"/></svg>
<svg style="left:508.8px;top:438.5px" width="9" height="6" viewBox="0 0 9 6"><path d="M1.8 6 A1.8 1.8 0 0 1 1.8 2.6 A2.8 2.8 0 0 1 7 2.8 A1.6 1.6 0 0 1 7.3 6 Z" fill="#1a7fd8"/></svg>
<svg style="left:527.3px;top:437px" width="5" height="9" viewBox="0 0 5 9"><rect x="1.2" y="0.5" width="2.6" height="5" rx="1.3" fill="#9aa598"/><path d="M0.5 4 A2 2 0 0 0 4.5 4 M2.5 6 V8.5" fill="none" stroke="#9aa598" stroke-width="0.7"/></svg>
<svg style="left:540.5px;top:438px" width="9" height="6" viewBox="0 0 9 6"><rect x="0.4" y="0.4" width="8.2" height="5.2" fill="none" stroke="#8f968c" stroke-width="0.7"/><path d="M2 2 H7 M2 4 H7" stroke="#a8aea4" stroke-width="0.5"/></svg>
<svg style="left:557px;top:438px" width="8" height="7" viewBox="0 0 8 7"><rect x="0.4" y="0.4" width="7.2" height="6.2" fill="none" stroke="#8f968c" stroke-width="0.7"/><rect x="3" y="3" width="2.5" height="3.5" fill="#a0a69c"/></svg>
<!-- recorder bar -->
<div class="a" style="left:571.4px;top:437.7px;width:120px;height:20px;background:#273240;border-radius:3px"></div>
<svg style="left:577.5px;top:443px" width="5" height="9" viewBox="0 0 5 9"><g fill="#d8dde3"><rect x="0" y="0" width="1.5" height="1.5"/><rect x="3" y="0" width="1.5" height="1.5"/><rect x="0" y="3" width="1.5" height="1.5"/><rect x="3" y="3" width="1.5" height="1.5"/><rect x="0" y="6" width="1.5" height="1.5"/><rect x="3" y="6" width="1.5" height="1.5"/></g></svg>
<div class="a" style="left:596.3px;top:442.8px;width:2px;height:8.4px;background:#e8ebef"></div>
<div class="a" style="left:600.2px;top:442.8px;width:2px;height:8.4px;background:#e8ebef"></div>
<div class="a" style="left:643.2px;top:443.5px;width:7.2px;height:7.5px;background:#e8ebef;border-radius:0.5px"></div>

<svg id="ov" style="left:0;top:0;pointer-events:none" width="680" height="453" viewBox="0 0 680 453" font-family="Liberation Sans">
<text x="18.74" y="11.00" font-size="6.40" fill="#555" textLength="14.51" lengthAdjust="spacingAndGlyphs">Menu</text>
<text x="77.52" y="10.60" font-size="6.98" fill="#3a3a3a" textLength="47.56" lengthAdjust="spacingAndGlyphs">Assignment 1.pdf</text>
<text x="180.92" y="11.00" font-size="6.98" fill="#5a5a5a" textLength="15.46" lengthAdjust="spacingAndGlyphs">Create</text>
<text x="570.09" y="11.10" font-size="7.85" fill="#333" textLength="23.53" lengthAdjust="spacingAndGlyphs">Sign in</text>
<text x="6.70" y="30.90" font-size="7.56" fill="#4b4b4b" textLength="23.30" lengthAdjust="spacingAndGlyphs">All tools</text>
<text x="41.50" y="30.90" font-size="7.56" fill="#4b4b4b" textLength="11.90" lengthAdjust="spacingAndGlyphs">Edit</text>
<text x="64.60" y="30.90" font-size="7.56" fill="#4b4b4b" textLength="22.90" lengthAdjust="spacingAndGlyphs">Convert</text>
<text x="98.50" y="30.90" font-size="7.56" fill="#4b4b4b" textLength="18.30" lengthAdjust="spacingAndGlyphs">E-Sign</text>
<text x="411.42" y="30.60" font-size="7.12" fill="#5a5a5a" textLength="47.67" lengthAdjust="spacingAndGlyphs">Find text or tools</text>
<text x="633.93" y="30.40" font-size="6.69" fill="#fff" font-weight="bold" textLength="34.53" lengthAdjust="spacingAndGlyphs">AI Assistant</text>
<text x="666.09" y="298.50" font-size="7.70" fill="#333" textLength="4.02" lengthAdjust="spacingAndGlyphs">7</text>
<text x="665.24" y="316.30" font-size="6.40" fill="#444" textLength="5.81" lengthAdjust="spacingAndGlyphs">12</text>
<text x="209.89" y="298.20" font-size="7.70" fill="#222" textLength="22.42" lengthAdjust="spacingAndGlyphs">Figure 3</text>
<text x="198.91" y="312.30" font-size="7.27" fill="#222" textLength="9.78" lengthAdjust="spacingAndGlyphs">File</text>
<text x="217.01" y="312.30" font-size="7.27" fill="#222" textLength="11.28" lengthAdjust="spacingAndGlyphs">Edit</text>
<text x="236.01" y="312.30" font-size="7.27" fill="#222" textLength="13.78" lengthAdjust="spacingAndGlyphs">View</text>
<text x="257.51" y="312.30" font-size="7.27" fill="#222" textLength="15.48" lengthAdjust="spacingAndGlyphs">Insert</text>
<text x="281.31" y="312.30" font-size="7.27" fill="#222" textLength="14.58" lengthAdjust="spacingAndGlyphs">Tools</text>
<text x="304.41" y="312.30" font-size="7.27" fill="#222" textLength="23.08" lengthAdjust="spacingAndGlyphs">Desktop</text>
<text x="335.01" y="312.30" font-size="7.27" fill="#222" textLength="23.38" lengthAdjust="spacingAndGlyphs">Window</text>
<text x="366.91" y="312.30" font-size="7.27" fill="#222" textLength="13.48" lengthAdjust="spacingAndGlyphs">Help</text>
<text x="24.96" y="439.90" font-size="5.96" fill="#4a4a4a" textLength="11.88" lengthAdjust="spacingAndGlyphs">21°C</text>
<text x="24.96" y="447.60" font-size="6.10" fill="#7a7a7a" textLength="12.89" lengthAdjust="spacingAndGlyphs">Haze</text>
<text x="161.53" y="444.10" font-size="6.83" fill="#666" textLength="20.55" lengthAdjust="spacingAndGlyphs">Search</text>
<text x="636.81" y="436.50" font-size="4.80" fill="#a0a0a0" textLength="18.38" lengthAdjust="spacingAndGlyphs">7:22 PM</text>
<text x="605.57" y="450.20" font-size="8.14" fill="#eef0f3" textLength="18.45" lengthAdjust="spacingAndGlyphs">Pause</text>
<text x="653.17" y="450.20" font-size="8.14" fill="#eef0f3" textLength="15.15" lengthAdjust="spacingAndGlyphs">Stop</text>
<text x="670.37" y="450.20" font-size="8.14" fill="#8a939e" textLength="16.95" lengthAdjust="spacingAndGlyphs">(F8)</text>
<text x="162.21" y="279.00" font-size="9.77" fill="#2a2a2a" font-family="Liberation Serif" textLength="57.18" lengthAdjust="spacingAndGlyphs">The result is as:</text>
</svg>
</body></html>
